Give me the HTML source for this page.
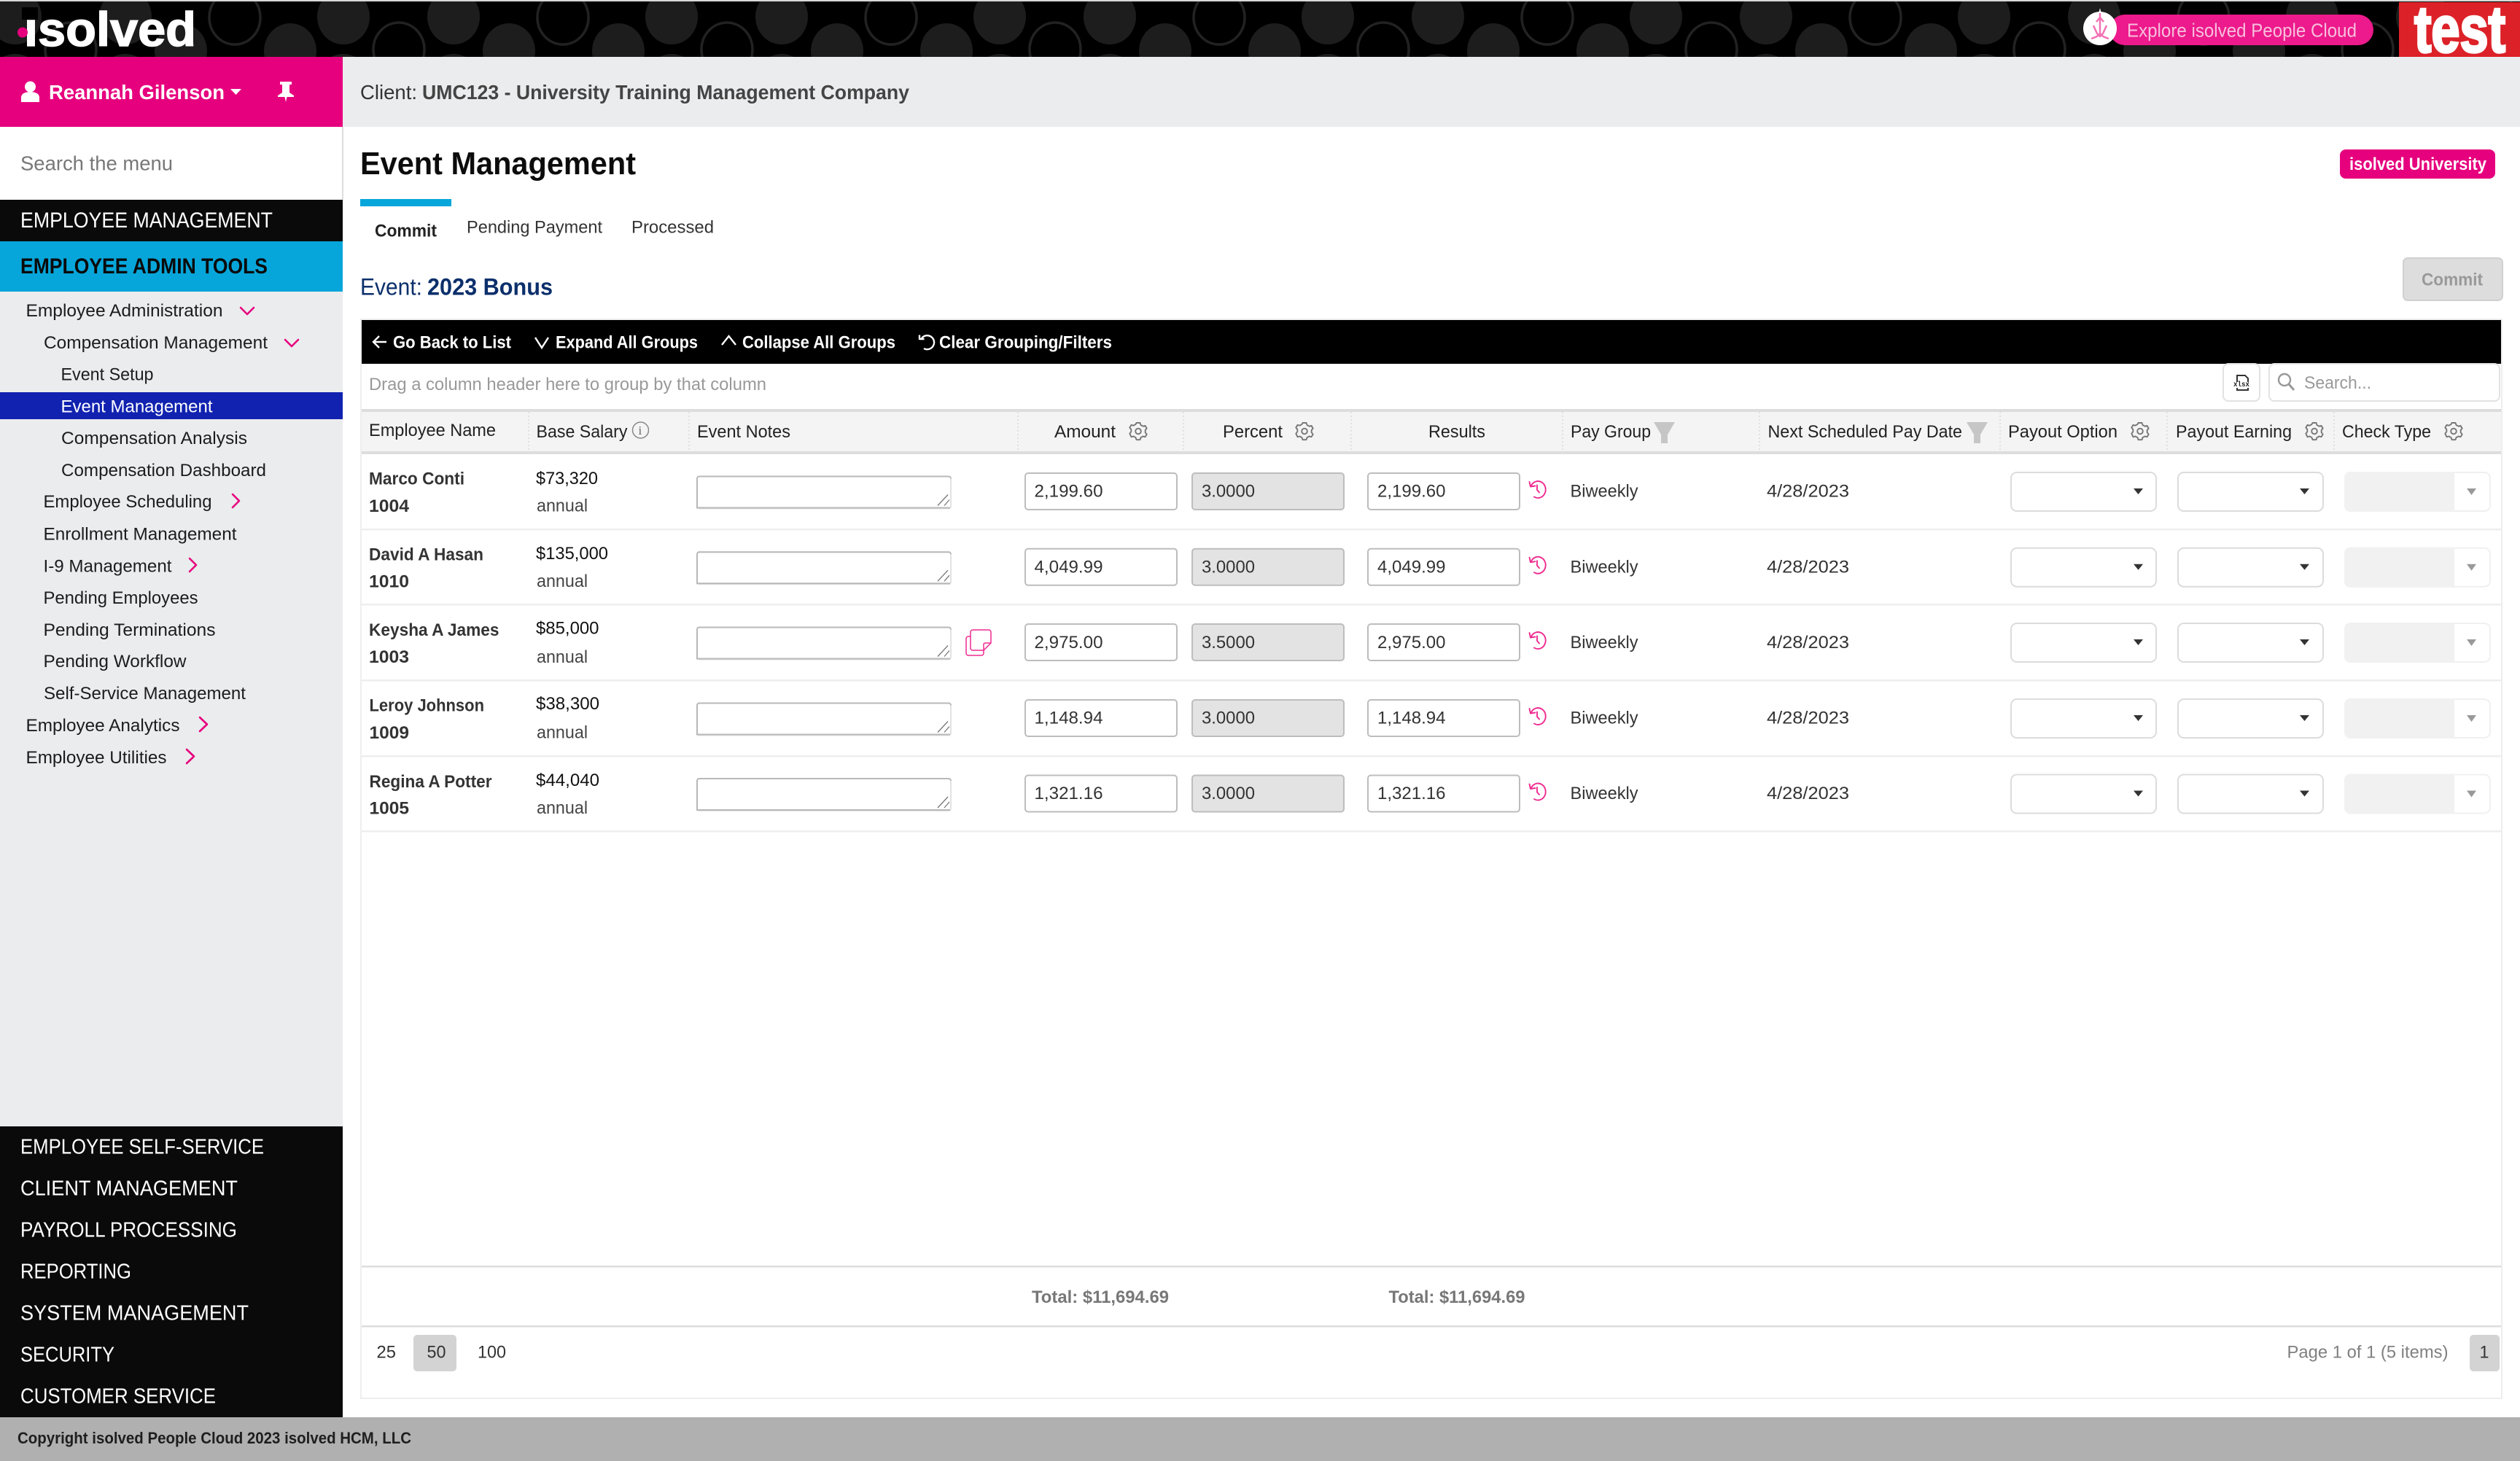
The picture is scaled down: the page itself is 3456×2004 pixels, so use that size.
<!DOCTYPE html>
<html lang="en"><head><meta charset="utf-8"><title>Event Management</title>
<style>
html,body{margin:0;padding:0;background:#fff;width:3456px;height:2004px;overflow:hidden}
svg{display:block}
text{font-family:"Liberation Sans",Arial,sans-serif;font-size:24px;fill:#333;white-space:pre}
.b{font-weight:bold}
.w{fill:#fff}
.nav{font-size:24px;fill:#1c1c1c}
.top{font-size:29px;fill:#fff}
.h{fill:#222}
.tb{fill:#fff;font-weight:bold}
.name{font-weight:bold;fill:#333}
.sal{fill:#111}
.ann{fill:#444}
.chev{fill:none;stroke:#e6007e;stroke-width:2.6;stroke-linecap:round;stroke-linejoin:round}
</style></head>
<body>
<svg width="3456" height="2004" viewBox="0 0 3456 2004" xmlns="http://www.w3.org/2000/svg">
<defs>
<pattern id="dots" x="0" y="2" width="450" height="76" patternUnits="userSpaceOnUse">
  <g fill="#1d1d1d">
    <ellipse cx="21" cy="21" rx="36" ry="38"/><ellipse cx="471" cy="21" rx="36" ry="38"/>
    <ellipse cx="172" cy="21" rx="36" ry="38"/>
    <ellipse cx="248" cy="68" rx="36" ry="38"/>
    <ellipse cx="398" cy="68" rx="36" ry="38"/>
    <ellipse cx="21" cy="108" rx="36" ry="36"/><ellipse cx="471" cy="108" rx="36" ry="36"/>
    <ellipse cx="172" cy="108" rx="36" ry="36"/>
  </g>
  <g fill="none" stroke="#222" stroke-width="3.5">
    <ellipse cx="322" cy="22" rx="35" ry="37"/>
    <ellipse cx="97" cy="66" rx="35" ry="37"/>
  </g>
</pattern>
<g id="gear" fill="none" stroke="#777" stroke-width="1.9" stroke-linejoin="round">
  <path d="M9.5 1h5l1 3 3 1.7 3-.8 2.2 3.6-2 2.5v3.2l2 2.5-2.2 3.6-3-.8-3 1.7-1 3h-5l-1-3-3-1.7-3 .8L.3 15.700l2-2.500V10L.3 7.500 2.500 3.900l3 .8 3-1.700z"/>
  <circle cx="12" cy="12.500" r="3.800"/>
</g>
<path id="funnel" fill="#c6c6c6" d="M0 0H29L19 17V29H10V17Z"/>
<g id="clock" fill="none" stroke="#ef2a90" stroke-width="1.900" stroke-linecap="round" stroke-linejoin="round">
  <path d="M4 7A10.500 11.500 0 1 1 8 22.500"/>
  <path d="M1.500 2L3 8.500 9.500 7.500"/>
  <path d="M12 6.500V13L15 16.500"/>
</g>
<g id="row">
  <g transform="translate(0,1.500)">
  <rect x="956" y="652" width="348" height="44" rx="3" fill="#fff" stroke="#e2e2e2" stroke-width="2"/>
  <path d="M956 696V655a3 3 0 0 1 3-3H1301a3 3 0 0 1 3 3" fill="none" stroke="#b8b8b8" stroke-width="2"/>
  <path d="M957 695H1303" stroke="#b8b8b8" stroke-width="2"/>
  <path d="M1286 692L1300 677M1295 692L1302 684" stroke="#777" stroke-width="1.300" fill="none"/>
  </g>
  <rect x="1406" y="649" width="208" height="50" rx="4" fill="#fff" stroke="#bdbdbd" stroke-width="2"/>
  <rect x="1635" y="649" width="208" height="50" rx="4" fill="#e3e3e3" stroke="#bdbdbd" stroke-width="2"/>
  <rect x="1876" y="649" width="208" height="50" rx="4" fill="#fff" stroke="#bdbdbd" stroke-width="2"/>
  <use href="#clock" x="2096" y="659"/>
  <rect x="2758" y="648" width="199" height="53" rx="8" fill="#fff" stroke="#dcdcdc" stroke-width="2"/>
  <path d="M2926 670H2939L2932.500 678Z" fill="#333"/>
  <rect x="2987" y="648" width="199" height="53" rx="8" fill="#fff" stroke="#dcdcdc" stroke-width="2"/>
  <path d="M3154 670H3167L3160.500 678Z" fill="#333"/>
  <rect x="3216" y="648" width="199" height="53" rx="8" fill="#fff" stroke="#f0f0f0" stroke-width="2"/>
  <path d="M3223 647H3366V702H3223a8 8 0 0 1-8-8V655a8 8 0 0 1 8-8Z" fill="#f1f1f1"/>
  <path d="M3383 670H3396L3389.500 679Z" fill="#999"/>
</g>
</defs>

<!-- top banner -->
<rect width="3456" height="78" fill="#000"/>
<rect width="3456" height="2" fill="#d8d8d8"/>
<rect y="2" width="3456" height="76" fill="url(#dots)"/>
<text x="33" y="63" class="b w" style="font-size:66px;stroke:#fff;stroke-width:1.500" textLength="236" lengthAdjust="spacingAndGlyphs">isolved</text>
<rect x="30" y="10" width="22" height="17" fill="#000"/>
<circle cx="31" cy="44.500" r="7" fill="#e6007e"/>

<rect x="2893" y="20" width="362" height="42" rx="21" fill="#ec1a8c"/>
<circle cx="2880" cy="39" r="23" fill="#fff"/>
<path d="M2880 11L2885 30H2875Z" fill="#fff"/>
<path d="M2880 18V50M2875 30L2880 24 2885 30M2871 35L2876 46 2880 50 2884 46 2889 35M2868 53C2874 51 2877 50 2880 46 2883 50 2886 51 2892 53" fill="none" stroke="#f272b4" stroke-width="2.500"/>
<text x="2917" y="50.500" style="font-size:26px;fill:#f8bfdd" textLength="315" lengthAdjust="spacingAndGlyphs">Explore isolved People Cloud</text>
<rect x="3290" y="3" width="166" height="75" fill="#dc2228"/>
<text x="3311" y="71" class="b" style="font-size:90px;fill:#fff;stroke:#fff;stroke-width:3.500" textLength="125" lengthAdjust="spacingAndGlyphs">test</text>

<!-- client bar -->
<rect x="470" y="78" width="2986" height="96" fill="#ebecee"/>
<text x="494" y="136" style="font-size:28px;fill:#333" textLength="78" lengthAdjust="spacingAndGlyphs">Client:</text>
<text x="579" y="136" class="b" style="font-size:28px;fill:#444" textLength="668" lengthAdjust="spacingAndGlyphs">UMC123 - University Training Management Company</text>

<!-- sidebar -->
<rect y="78" width="470" height="96" fill="#e6007e"/>
<circle cx="41.500" cy="119" r="7.500" fill="#fff"/>
<path d="M29 140V134C29 128 35 126 41.500 126S54 128 54 134V140Z" fill="#fff"/>
<text x="67" y="136" class="b w" style="font-size:28px" textLength="241" lengthAdjust="spacingAndGlyphs">Reannah Gilenson</text>
<path d="M316 122H331L323.500 130Z" fill="#fff"/>
<path d="M384 112H400V116H397V127L403 131V133H381V131L387 127V116H384ZM390.500 133H393.500L392 140Z" fill="#fff"/>
<rect x="0" y="174" width="470" height="100" fill="#fff"/>
<rect x="469" y="174" width="2" height="100" fill="#ddd"/>
<text x="28" y="233.500" style="font-size:28px;fill:#777" textLength="209" lengthAdjust="spacingAndGlyphs">Search the menu</text>
<rect y="274" width="470" height="57" fill="#0a0a0a"/>
<text x="28" y="312" style="font-size:30px;fill:#fff" textLength="346" lengthAdjust="spacingAndGlyphs">EMPLOYEE MANAGEMENT</text>
<rect y="331" width="470" height="69" fill="#07a6da"/>
<text x="28" y="375" class="b" style="font-size:30px;fill:#0a0a0a" textLength="339" lengthAdjust="spacingAndGlyphs">EMPLOYEE ADMIN TOOLS</text>
<rect y="400" width="470" height="1145" fill="#ebecee"/>
<rect y="538" width="470" height="37" fill="#1122b0"/>

<text class="nav" x="35.500" y="434" textLength="270" lengthAdjust="spacingAndGlyphs">Employee Administration</text>
<text class="nav" x="60" y="477.800" textLength="307" lengthAdjust="spacingAndGlyphs">Compensation Management</text>
<text class="nav" x="83.500" y="521.600" textLength="127" lengthAdjust="spacingAndGlyphs">Event Setup</text>
<text class="nav" x="83.500" y="565.400" style="fill:#fff" textLength="208" lengthAdjust="spacingAndGlyphs">Event Management</text>
<text class="nav" x="84" y="609.200" textLength="255" lengthAdjust="spacingAndGlyphs">Compensation Analysis</text>
<text class="nav" x="84" y="653" textLength="281" lengthAdjust="spacingAndGlyphs">Compensation Dashboard</text>
<text class="nav" x="59.500" y="696" textLength="231" lengthAdjust="spacingAndGlyphs">Employee Scheduling</text>
<text class="nav" x="59.500" y="740.600" textLength="265" lengthAdjust="spacingAndGlyphs">Enrollment Management</text>
<text class="nav" x="59.500" y="784.400" textLength="176" lengthAdjust="spacingAndGlyphs">I-9 Management</text>
<text class="nav" x="59.500" y="828.200" textLength="212" lengthAdjust="spacingAndGlyphs">Pending Employees</text>
<text class="nav" x="59.500" y="872" textLength="236" lengthAdjust="spacingAndGlyphs">Pending Terminations</text>
<text class="nav" x="59.500" y="915" textLength="196" lengthAdjust="spacingAndGlyphs">Pending Workflow</text>
<text class="nav" x="60" y="959" textLength="277" lengthAdjust="spacingAndGlyphs">Self-Service Management</text>
<text class="nav" x="35.500" y="1003" textLength="211" lengthAdjust="spacingAndGlyphs">Employee Analytics</text>
<text class="nav" x="35.500" y="1047" textLength="193" lengthAdjust="spacingAndGlyphs">Employee Utilities</text>

<path class="chev" d="M330 422L339 431 348 422"/>
<path class="chev" d="M391 466L400 475 409 466"/>
<path class="chev" d="M319 678L328 687 319 696"/>
<path class="chev" d="M260 766L269 775 260 784"/>
<path class="chev" d="M274 984L284 993.500 274 1003"/>
<path class="chev" d="M256 1028L266 1037.500 256 1047"/>

<rect y="1545" width="470" height="399" fill="#0a0a0a"/>
<text class="top" x="28" y="1582.500" textLength="334" lengthAdjust="spacingAndGlyphs">EMPLOYEE SELF-SERVICE</text>
<text class="top" x="28" y="1639.500" textLength="298" lengthAdjust="spacingAndGlyphs">CLIENT MANAGEMENT</text>
<text class="top" x="28" y="1696.500" textLength="297" lengthAdjust="spacingAndGlyphs">PAYROLL PROCESSING</text>
<text class="top" x="28" y="1753.500" textLength="152" lengthAdjust="spacingAndGlyphs">REPORTING</text>
<text class="top" x="28" y="1810.500" textLength="313" lengthAdjust="spacingAndGlyphs">SYSTEM MANAGEMENT</text>
<text class="top" x="28" y="1867.500" textLength="129" lengthAdjust="spacingAndGlyphs">SECURITY</text>
<text class="top" x="28" y="1924.500" textLength="268" lengthAdjust="spacingAndGlyphs">CUSTOMER SERVICE</text>

<!-- footer -->
<rect y="1944" width="3456" height="60" fill="#b0b0b0"/>
<text x="24" y="1980" class="b" style="font-size:22px;fill:#1e1e1e" textLength="540" lengthAdjust="spacingAndGlyphs">Copyright isolved People Cloud 2023 isolved HCM, LLC</text>

<!-- page head -->
<text x="494" y="239" class="b" style="font-size:44px;fill:#0c0c0c" textLength="378" lengthAdjust="spacingAndGlyphs">Event Management</text>
<rect x="3209" y="205" width="213" height="40" rx="8" fill="#e6007e"/>
<text x="3222" y="233" class="b w" textLength="188" lengthAdjust="spacingAndGlyphs">isolved University</text>
<rect x="494" y="273" width="125" height="10" fill="#07a6da"/>
<text x="514" y="324.500" class="b" style="fill:#222" textLength="85" lengthAdjust="spacingAndGlyphs">Commit</text>
<text x="640" y="319.500" textLength="186" lengthAdjust="spacingAndGlyphs">Pending Payment</text>
<text x="866" y="319.500" textLength="113" lengthAdjust="spacingAndGlyphs">Processed</text>
<text x="494" y="404.500" style="font-size:32px;fill:#0b2f6b" textLength="85" lengthAdjust="spacingAndGlyphs">Event:</text>
<text x="586" y="404.500" class="b" style="font-size:32px;fill:#0b2f6b" textLength="172" lengthAdjust="spacingAndGlyphs">2023 Bonus</text>
<rect x="3296" y="354" width="136" height="58" rx="6" fill="#dddddd" stroke="#d0d0d0" stroke-width="2"/>
<text x="3321" y="391.500" class="b" style="fill:#999" textLength="84" lengthAdjust="spacingAndGlyphs">Commit</text>

<!-- grid frame -->
<rect x="495" y="438" width="2936" height="1480" fill="#fff" stroke="#eee" stroke-width="2"/>
<rect x="496" y="439" width="2934" height="60" fill="#000"/>
<path d="M530 469H513M520 461L512 469 520 477" fill="none" stroke="#fff" stroke-width="2.400"/>
<text class="tb" x="539" y="477.500" textLength="162" lengthAdjust="spacingAndGlyphs">Go Back to List</text>
<path d="M734 463L743 477 752 463" fill="none" stroke="#fff" stroke-width="2.400"/>
<text class="tb" x="762" y="477.500" textLength="195" lengthAdjust="spacingAndGlyphs">Expand All Groups</text>
<path d="M990 473L999.500 461 1009 473" fill="none" stroke="#fff" stroke-width="2.400"/>
<text class="tb" x="1018" y="477.500" textLength="210" lengthAdjust="spacingAndGlyphs">Collapse All Groups</text>
<g transform="translate(1259,458)" fill="none" stroke="#fff" stroke-width="2.400" stroke-linejoin="round">
  <path d="M5 6A9.500 9.500 0 1 1 8 20"/><path d="M2 1.500V7H8.500"/>
</g>
<text class="tb" x="1288" y="477.500" textLength="237" lengthAdjust="spacingAndGlyphs">Clear Grouping/Filters</text>

<text x="506" y="535" style="fill:#999" textLength="545" lengthAdjust="spacingAndGlyphs">Drag a column header here to group by that column</text>
<rect x="3049" y="499" width="50" height="51" rx="7" fill="#fff" stroke="#e2e2e2" stroke-width="2"/>
<path d="M3068 524V515H3079L3083 519V524M3068 532V535H3083V532" fill="none" stroke="#333" stroke-width="2"/>
<text x="3063" y="530" style="font-family:'Liberation Mono',monospace;font-size:10px;font-weight:bold;fill:#222" textLength="22" lengthAdjust="spacingAndGlyphs">xlsx</text>
<rect x="3112" y="499" width="316" height="51" rx="7" fill="#fff" stroke="#e2e2e2" stroke-width="2"/>
<circle cx="3133" cy="521" r="8" fill="none" stroke="#999" stroke-width="2.400"/>
<path d="M3139 527L3146 535" stroke="#999" stroke-width="3"/>
<text x="3160" y="533" style="fill:#999" textLength="92" lengthAdjust="spacingAndGlyphs">Search...</text>

<!-- grid header -->
<rect x="496" y="561" width="2934" height="4" fill="#ddd"/>
<rect x="496" y="565" width="2934" height="54" fill="#f4f4f4"/>
<rect x="496" y="619" width="2934" height="4" fill="#ddd"/>
<g stroke="#d9d9d9" stroke-width="1.500" stroke-dasharray="2 3">
  <path d="M725 565V619M945 565V619M1396 565V619M1623 565V619M1853 565V619M2143 565V619M2413 565V619M2743 565V619M2972 565V619M3201 565V619"/>
</g>
<text class="h" x="506" y="598" textLength="174" lengthAdjust="spacingAndGlyphs">Employee Name</text>
<text class="h" x="735.500" y="600" textLength="125" lengthAdjust="spacingAndGlyphs">Base Salary</text>
<circle cx="878.500" cy="590" r="11" fill="none" stroke="#888" stroke-width="1.500"/>
<text x="875.500" y="596" style="font-family:'Liberation Serif',serif;font-size:17px;fill:#666">i</text>
<text class="h" x="956" y="600" textLength="128" lengthAdjust="spacingAndGlyphs">Event Notes</text>
<text class="h" x="1446" y="600" textLength="84" lengthAdjust="spacingAndGlyphs">Amount</text>
<use href="#gear" x="1549" y="579"/>
<text class="h" x="1677" y="600" textLength="82" lengthAdjust="spacingAndGlyphs">Percent</text>
<use href="#gear" x="1777" y="579"/>
<text class="h" x="1959" y="600" textLength="78" lengthAdjust="spacingAndGlyphs">Results</text>
<text class="h" x="2154" y="600" textLength="110" lengthAdjust="spacingAndGlyphs">Pay Group</text>
<use href="#funnel" x="2268" y="579"/>
<text class="h" x="2424.500" y="600" textLength="266.500" lengthAdjust="spacingAndGlyphs">Next Scheduled Pay Date</text>
<use href="#funnel" x="2697" y="579"/>
<text class="h" x="2754" y="600" textLength="150" lengthAdjust="spacingAndGlyphs">Payout Option</text>
<use href="#gear" x="2923" y="579"/>
<text class="h" x="2984" y="600" textLength="159" lengthAdjust="spacingAndGlyphs">Payout Earning</text>
<use href="#gear" x="3162" y="579"/>
<text class="h" x="3212" y="600" textLength="122" lengthAdjust="spacingAndGlyphs">Check Type</text>
<use href="#gear" x="3353" y="579"/>

<!-- row separators -->
<g fill="#eeeeee">
  <rect x="496" y="725" width="2934" height="2.500"/>
  <rect x="496" y="828" width="2934" height="2.500"/>
  <rect x="496" y="932" width="2934" height="2.500"/>
  <rect x="496" y="1036" width="2934" height="2.500"/>
  <rect x="496" y="1139" width="2934" height="2.500"/>
</g>

<use href="#row"/>
<use href="#row" y="103.700"/>
<use href="#row" y="207"/>
<use href="#row" y="311"/>
<use href="#row" y="414.500"/>

<!-- copy icon row 3 -->
<g fill="none" stroke="#ef2a90" stroke-width="1.500" stroke-linejoin="round">
  <path d="M1331 873H1328a3 3 0 0 0-3 3V896a3 3 0 0 0 3 3H1346a3 3 0 0 0 3-3V892"/>
  <path d="M1331 867a3 3 0 0 1 3-3H1356a3 3 0 0 1 3 3V882L1349 892H1334a3 3 0 0 1-3-3Z"/>
  <path d="M1349 892V884a2 2 0 0 1 2-2H1359"/>
</g>

<!-- row 1 -->
<text class="name" x="506" y="664.700" textLength="131" lengthAdjust="spacingAndGlyphs">Marco Conti</text>
<text class="name" x="506" y="702" textLength="55" lengthAdjust="spacingAndGlyphs">1004</text>
<text class="sal" x="735" y="664" textLength="85" lengthAdjust="spacingAndGlyphs">$73,320</text>
<text class="ann" x="736" y="701.700" textLength="70" lengthAdjust="spacingAndGlyphs">annual</text>
<text x="1418.500" y="681.500" textLength="94" lengthAdjust="spacingAndGlyphs">2,199.60</text>
<text x="1648" y="681.500" textLength="73" lengthAdjust="spacingAndGlyphs">3.0000</text>
<text x="1889" y="681.500" textLength="93.500" lengthAdjust="spacingAndGlyphs">2,199.60</text>
<text x="2153.500" y="681.500" textLength="93" lengthAdjust="spacingAndGlyphs">Biweekly</text>
<text x="2423" y="681.500" textLength="113" lengthAdjust="spacingAndGlyphs">4/28/2023</text>
<!-- row 2 -->
<text class="name" x="506" y="768.500" textLength="157" lengthAdjust="spacingAndGlyphs">David A Hasan</text>
<text class="name" x="506" y="805.500" textLength="55" lengthAdjust="spacingAndGlyphs">1010</text>
<text class="sal" x="735" y="767" textLength="99" lengthAdjust="spacingAndGlyphs">$135,000</text>
<text class="ann" x="736" y="805" textLength="70" lengthAdjust="spacingAndGlyphs">annual</text>
<text x="1418.500" y="785.500" textLength="94" lengthAdjust="spacingAndGlyphs">4,049.99</text>
<text x="1648" y="785.500" textLength="73" lengthAdjust="spacingAndGlyphs">3.0000</text>
<text x="1889" y="785.500" textLength="93.500" lengthAdjust="spacingAndGlyphs">4,049.99</text>
<text x="2153.500" y="785.500" textLength="93" lengthAdjust="spacingAndGlyphs">Biweekly</text>
<text x="2423" y="785.500" textLength="113" lengthAdjust="spacingAndGlyphs">4/28/2023</text>
<!-- row 3 -->
<text class="name" x="506" y="872" textLength="178.500" lengthAdjust="spacingAndGlyphs">Keysha A James</text>
<text class="name" x="506" y="909" textLength="55" lengthAdjust="spacingAndGlyphs">1003</text>
<text class="sal" x="735" y="869.500" textLength="86.500" lengthAdjust="spacingAndGlyphs">$85,000</text>
<text class="ann" x="736" y="909" textLength="70" lengthAdjust="spacingAndGlyphs">annual</text>
<text x="1418.500" y="889" textLength="94" lengthAdjust="spacingAndGlyphs">2,975.00</text>
<text x="1648" y="889" textLength="73" lengthAdjust="spacingAndGlyphs">3.5000</text>
<text x="1889" y="889" textLength="93.500" lengthAdjust="spacingAndGlyphs">2,975.00</text>
<text x="2153.500" y="889" textLength="93" lengthAdjust="spacingAndGlyphs">Biweekly</text>
<text x="2423" y="889" textLength="113" lengthAdjust="spacingAndGlyphs">4/28/2023</text>
<!-- row 4 -->
<text class="name" x="506.500" y="975.700" textLength="157.500" lengthAdjust="spacingAndGlyphs">Leroy Johnson</text>
<text class="name" x="506.500" y="1013" textLength="54.500" lengthAdjust="spacingAndGlyphs">1009</text>
<text class="sal" x="735" y="973" textLength="87" lengthAdjust="spacingAndGlyphs">$38,300</text>
<text class="ann" x="736" y="1012.700" textLength="70" lengthAdjust="spacingAndGlyphs">annual</text>
<text x="1418.500" y="992.500" textLength="94" lengthAdjust="spacingAndGlyphs">1,148.94</text>
<text x="1648" y="992.500" textLength="73" lengthAdjust="spacingAndGlyphs">3.0000</text>
<text x="1889" y="992.500" textLength="93.500" lengthAdjust="spacingAndGlyphs">1,148.94</text>
<text x="2153.500" y="992.500" textLength="93" lengthAdjust="spacingAndGlyphs">Biweekly</text>
<text x="2423" y="992.500" textLength="113" lengthAdjust="spacingAndGlyphs">4/28/2023</text>
<!-- row 5 -->
<text class="name" x="506.500" y="1080" textLength="168" lengthAdjust="spacingAndGlyphs">Regina A Potter</text>
<text class="name" x="506.500" y="1116.700" textLength="54.500" lengthAdjust="spacingAndGlyphs">1005</text>
<text class="sal" x="735" y="1078" textLength="87" lengthAdjust="spacingAndGlyphs">$44,040</text>
<text class="ann" x="736" y="1116" textLength="70" lengthAdjust="spacingAndGlyphs">annual</text>
<text x="1418.500" y="1096" textLength="94" lengthAdjust="spacingAndGlyphs">1,321.16</text>
<text x="1648" y="1096" textLength="73" lengthAdjust="spacingAndGlyphs">3.0000</text>
<text x="1889" y="1096" textLength="93.500" lengthAdjust="spacingAndGlyphs">1,321.16</text>
<text x="2153.500" y="1096" textLength="93" lengthAdjust="spacingAndGlyphs">Biweekly</text>
<text x="2423" y="1096" textLength="113" lengthAdjust="spacingAndGlyphs">4/28/2023</text>

<!-- totals and pager -->
<rect x="496" y="1736" width="2934" height="2.500" fill="#ddd"/>
<text x="1415" y="1787" class="b" style="fill:#777" textLength="188" lengthAdjust="spacingAndGlyphs">Total: $11,694.69</text>
<text x="1904.500" y="1787" class="b" style="fill:#777" textLength="187" lengthAdjust="spacingAndGlyphs">Total: $11,694.69</text>
<rect x="496" y="1818" width="2934" height="2.500" fill="#ddd"/>
<text x="516.500" y="1862.700" textLength="26.500" lengthAdjust="spacingAndGlyphs">25</text>
<rect x="567" y="1831" width="59" height="50" rx="5" fill="#d3d3d3"/>
<text x="585.500" y="1862.700" textLength="26" lengthAdjust="spacingAndGlyphs">50</text>
<text x="655" y="1862.700" textLength="39" lengthAdjust="spacingAndGlyphs">100</text>
<text x="3136.500" y="1862.700" style="fill:#808080" textLength="221" lengthAdjust="spacingAndGlyphs">Page 1 of 1 (5 items)</text>
<rect x="3387" y="1831" width="41" height="50" rx="5" fill="#d3d3d3"/>
<text x="3400.500" y="1862.700" textLength="13" lengthAdjust="spacingAndGlyphs">1</text>
</svg>
</body></html>
